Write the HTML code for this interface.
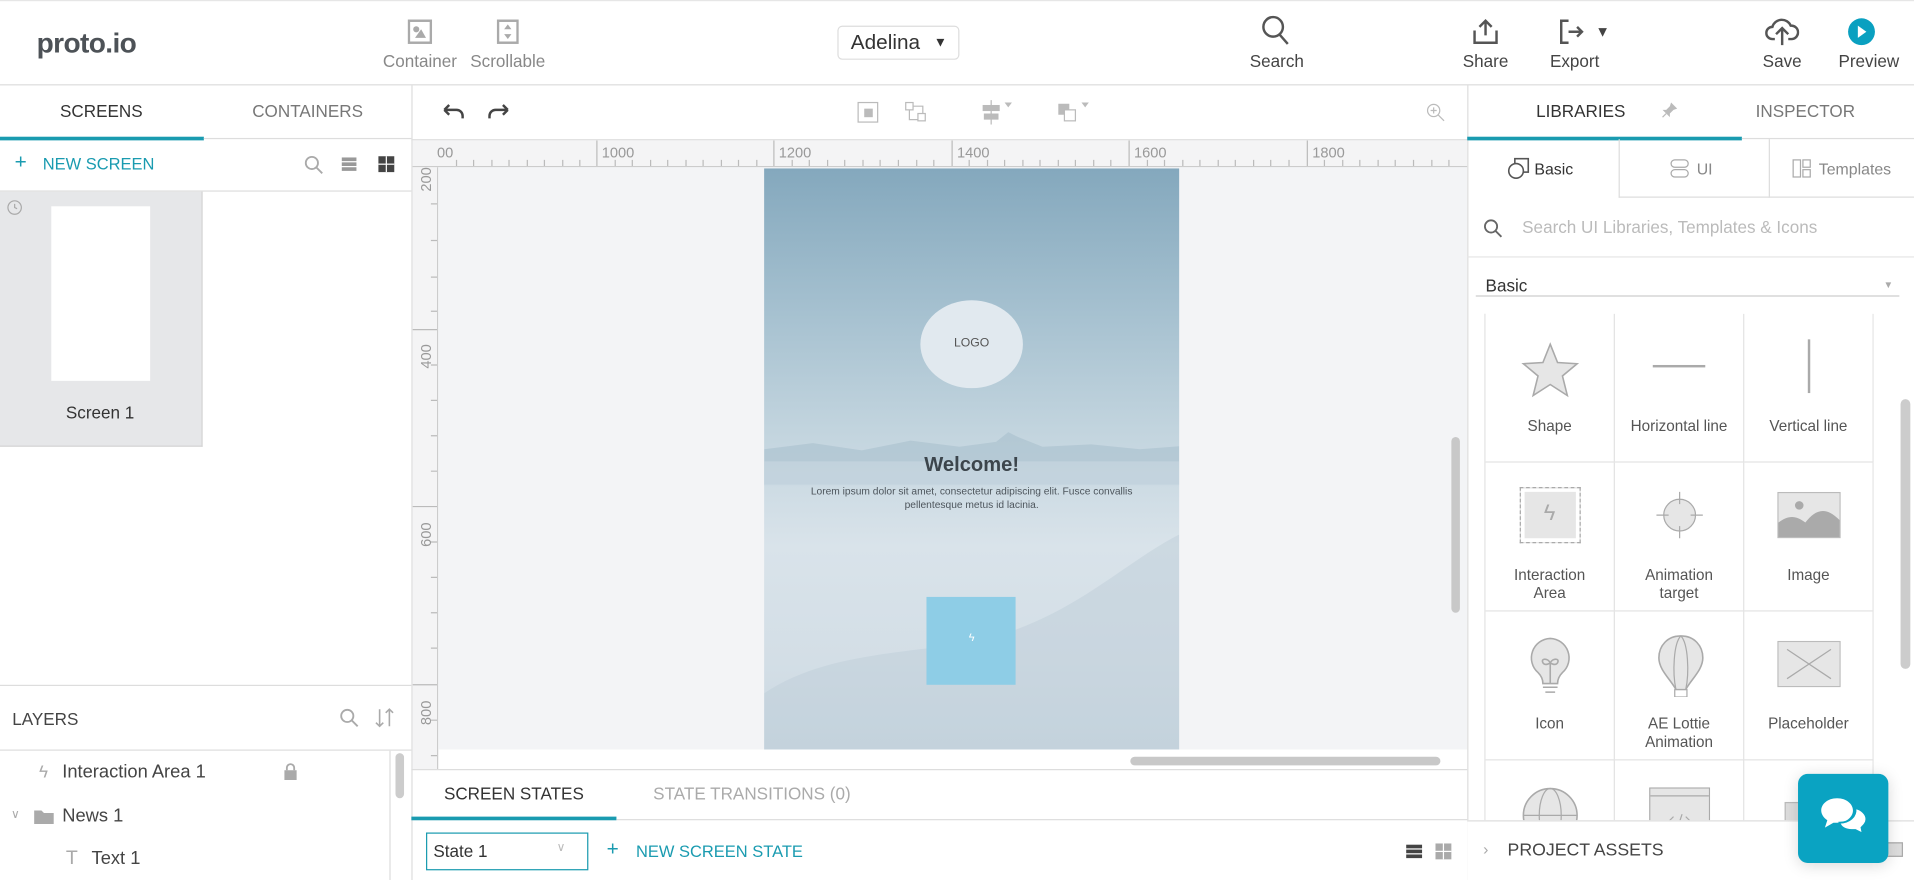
<!DOCTYPE html>
<html><head><meta charset="utf-8"><style>
*{box-sizing:border-box;margin:0;padding:0}
html,body{width:1914px;height:880px;overflow:hidden;background:#fff}
#s{position:absolute;left:0;top:0;width:1568px;height:721px;transform:scale(1.22066);transform-origin:0 0;font-family:"Liberation Sans",sans-serif;color:#555;font-size:14px}
.a{position:absolute}
.t{position:absolute;white-space:nowrap}
.c{transform:translateX(-50%)}
.g{color:#888}
.teal{color:#1a9bb0}
.cell{position:absolute;width:106px;height:122px;border-right:1px solid #e3e3e3;border-bottom:1px solid #e3e3e3;text-align:center;font-size:12.5px;color:#555}
.cell span{position:absolute;left:0;right:0;line-height:15px}
</style></head><body><div id="s">
<div class="a" style="left:0;top:0;width:1568px;height:1px;background:#e6e6e6"></div>
<div class="a" style="left:0;top:69px;width:1568px;height:1px;background:#ddd"></div>
<div class="t" style="left:30px;top:22px;font-size:23px;font-weight:bold;color:#4d5257;letter-spacing:-0.5px">proto.io</div>
<svg class="a" style="left:334px;top:16px" width="20" height="20"><rect x="1" y="1" width="18" height="18" fill="none" stroke="#aaa" stroke-width="2"/><circle cx="7" cy="8" r="2.5" fill="#aaa"/><path d="M6 15l5-7 4 7z" fill="#aaa"/></svg>
<div class="t c g" style="left:344px;top:42px;font-size:14px">Container</div>
<svg class="a" style="left:407px;top:16px" width="18" height="20"><rect x="1" y="1" width="16" height="18" fill="none" stroke="#aaa" stroke-width="2"/><path d="M9 4l-3 4h6zM9 16l-3-4h6z" fill="#aaa"/></svg>
<div class="t c g" style="left:416px;top:42px;font-size:14px">Scrollable</div>
<div class="a" style="left:686px;top:21px;width:100px;height:28px;border:1px solid #ddd;border-radius:4px"></div>
<div class="t" style="left:697px;top:25px;font-size:17px;color:#333">Adelina</div>
<div class="t" style="left:765px;top:29px;font-size:11px;color:#333">▼</div>
<svg class="a" style="left:1033px;top:12px" width="24" height="26"><circle cx="10" cy="10" r="8" fill="none" stroke="#555" stroke-width="2"/><path d="M15 16l7 8" stroke="#555" stroke-width="2"/></svg>
<div class="t c" style="left:1046px;top:42px;color:#444">Search</div>
<svg class="a" style="left:1206px;top:15px" width="22" height="22"><path d="M11 14V2M6 7l5-5 5 5" fill="none" stroke="#555" stroke-width="2"/><path d="M2 10v10h18V10" fill="none" stroke="#555" stroke-width="2"/></svg>
<div class="t c" style="left:1217px;top:42px;color:#444">Share</div>
<svg class="a" style="left:1277px;top:15px" width="22" height="22"><path d="M8 2H2v18h6" fill="none" stroke="#555" stroke-width="2"/><path d="M8 11h11M15 7l4 4-4 4" fill="none" stroke="#555" stroke-width="2"/></svg>
<div class="t" style="left:1307px;top:19px;font-size:12px;color:#444">▼</div>
<div class="t c" style="left:1290px;top:42px;color:#444">Export</div>
<svg class="a" style="left:1446px;top:13px" width="28" height="26"><path d="M8 19H6a5 5 0 010-10 8 8 0 0115-1 5 5 0 011 11h-3" fill="none" stroke="#555" stroke-width="2"/><path d="M14 24V11M9 15l5-5 5 5" fill="none" stroke="#555" stroke-width="2"/></svg>
<div class="t c" style="left:1460px;top:42px;color:#444">Save</div>
<svg class="a" style="left:1513px;top:14px" width="24" height="24"><circle cx="12" cy="12" r="11" fill="#0aa0c0"/><path d="M9 7l7 5-7 5z" fill="#fff"/></svg>
<div class="t c" style="left:1531px;top:42px;color:#444">Preview</div>

<div class="a" style="left:337px;top:70px;width:1px;height:651px;background:#ddd"></div>
<div class="t c" style="left:83px;top:83px;color:#333">SCREENS</div>
<div class="t c g" style="left:252px;top:83px;color:#777">CONTAINERS</div>
<div class="a" style="left:0;top:112px;width:167px;height:3px;background:#1a9bb0"></div>
<div class="a" style="left:167px;top:113px;width:170px;height:1px;background:#ddd"></div>
<div class="t teal" style="left:12px;top:125px;font-size:17px;line-height:16px">+</div>
<div class="t teal" style="left:35px;top:127px;font-size:13.5px">NEW SCREEN</div>
<svg class="a" style="left:249px;top:127px" width="16" height="16"><circle cx="6.5" cy="6.5" r="5" fill="none" stroke="#aaa" stroke-width="1.5"/><path d="M10 10l5 5" stroke="#aaa" stroke-width="1.5"/></svg>
<div class="a" style="left:280px;top:129px;width:12px;height:3px;background:#999;box-shadow:0 4px 0 #999,0 8px 0 #999"></div>
<div class="a" style="left:310px;top:128px;width:13px;height:13px;background:linear-gradient(#fff,#fff) 6px 0/1px 13px no-repeat,linear-gradient(#fff,#fff) 0 6px/13px 1px no-repeat,#444"></div>
<div class="a" style="left:0;top:156px;width:337px;height:1px;background:#ddd"></div>
<div class="a" style="left:0;top:157px;width:166px;height:209px;background:#e6e7e9;border-right:1px solid #d5d5d5;border-bottom:1px solid #d5d5d5"></div>
<svg class="a" style="left:5px;top:163px" width="14" height="14"><circle cx="7" cy="7" r="5.5" fill="none" stroke="#aaa"/><path d="M7 4v3l2 1" fill="none" stroke="#aaa"/></svg>
<div class="a" style="left:42px;top:169px;width:81px;height:143px;background:#fff"></div>
<div class="t c" style="left:82px;top:330px;color:#333">Screen 1</div>
<div class="a" style="left:0;top:561px;width:337px;height:1px;background:#ddd"></div>
<div class="t" style="left:10px;top:581px;color:#444">LAYERS</div>
<svg class="a" style="left:278px;top:580px" width="16" height="16"><circle cx="6.5" cy="6.5" r="5" fill="none" stroke="#aaa" stroke-width="1.5"/><path d="M10 10l5 5" stroke="#aaa" stroke-width="1.5"/></svg>
<svg class="a" style="left:306px;top:580px" width="18" height="16"><path d="M5 1v14M2 12l3 3 3-3M13 15V1M10 4l3-3 3 3" fill="none" stroke="#aaa" stroke-width="1.3"/></svg>
<div class="a" style="left:0;top:614px;width:337px;height:1px;background:#ddd"></div>
<div class="a" style="left:319px;top:615px;width:1px;height:106px;background:#ddd"></div>
<div class="a" style="left:324px;top:617px;width:7px;height:37px;background:#ccc;border-radius:4px"></div>
<div class="t" style="left:32px;top:624px;color:#aaa;font-size:14px">ϟ</div>
<div class="t" style="left:51px;top:624px;color:#444;font-size:15px">Interaction Area 1</div>
<svg class="a" style="left:232px;top:625px" width="12" height="14"><path d="M3 6V4a3 3 0 016 0v2" fill="none" stroke="#aaa" stroke-width="1.5"/><rect x="1" y="6" width="10" height="8" fill="#aaa"/></svg>
<div class="t" style="left:9px;top:662px;color:#aaa;font-size:10px">∨</div>
<svg class="a" style="left:27px;top:662px" width="18" height="14"><path d="M1 2h6l2 2h8v9H1z" fill="#aaa"/></svg>
<div class="t" style="left:51px;top:660px;color:#444;font-size:15px">News 1</div>
<div class="t" style="left:54px;top:695px;color:#aaa;font-size:16px">T</div>
<div class="t" style="left:75px;top:695px;color:#444;font-size:15px">Text 1</div>

<svg class="a" style="left:360px;top:82px" width="60" height="18"><path d="M4 8h10a5 5 0 015 5v2M4 8l4-4M4 8l4 4" fill="none" stroke="#444" stroke-width="2"/><path d="M56 8H46a5 5 0 00-5 5v2M56 8l-4-4M56 8l-4 4" fill="none" stroke="#444" stroke-width="2"/></svg>
<svg class="a" style="left:700px;top:81px" width="64" height="22"><rect x="3" y="3" width="16" height="16" fill="none" stroke="#bbb"/><rect x="8" y="8" width="7" height="7" fill="#bbb"/><rect x="42" y="3" width="6" height="6" fill="none" stroke="#bbb"/><rect x="52" y="12" width="6" height="6" fill="none" stroke="#bbb"/><path d="M45 9v8h7M48 6h8v6" fill="none" stroke="#bbb"/></svg>
<svg class="a" style="left:802px;top:81px" width="30" height="22"><path d="M10 1v20" stroke="#bbb"/><rect x="3" y="5" width="14" height="5" fill="#bbb"/><rect x="4" y="12" width="12" height="5" fill="#bbb"/><path d="M21 3l3 4 3-4z" fill="#bbb"/></svg>
<svg class="a" style="left:865px;top:81px" width="30" height="22"><rect x="2" y="4" width="9" height="9" fill="#bbb"/><rect x="7" y="9" width="9" height="9" fill="#fff" stroke="#bbb"/><path d="M21 3l3 4 3-4z" fill="#bbb"/></svg>
<svg class="a" style="left:1168px;top:84px" width="16" height="16"><circle cx="6.5" cy="6.5" r="5" fill="none" stroke="#bbb"/><path d="M10 10l5 5M6.5 4v5M4 6.5h5" stroke="#bbb"/></svg>
<div class="a" style="left:337px;top:114px;width:865px;height:1px;background:#ddd"></div>
<div class="a" style="left:338px;top:115px;width:864px;height:22px;background:#f4f4f5;border-bottom:1px solid #ccc;overflow:hidden">
<svg width="864" height="22" style="position:absolute;left:0;top:0">
<g stroke="#bbb"><path d="M151 0v22M296 0v22M442 0v22M587 0v22M733 0v22"/>
<path d="M36 16v5M50 16v5M65 16v5M79 16v5M94 16v5M108 16v5M123 16v5M137 16v5M166 16v5M180 16v5M195 16v5M209 16v5M224 16v5M238 16v5M253 16v5M267 16v5M282 16v5M311 16v5M325 16v5M340 16v5M354 16v5M369 16v5M383 16v5M398 16v5M413 16v5M427 16v5M456 16v5M471 16v5M485 16v5M500 16v5M514 16v5M529 16v5M543 16v5M558 16v5M572 16v5M602 16v5M616 16v5M631 16v5M645 16v5M660 16v5M674 16v5M689 16v5M703 16v5M718 16v5M747 16v5M762 16v5M776 16v5M791 16v5M805 16v5M820 16v5M835 16v5M849 16v5"/></g>
<g font-size="12" fill="#999" font-family="Liberation Sans"><text x="20" y="14">00</text><text x="155" y="14">1000</text><text x="300" y="14">1200</text><text x="446" y="14">1400</text><text x="591" y="14">1600</text><text x="737" y="14">1800</text></g></svg></div>
<div class="a" style="left:338px;top:137px;width:21px;height:493px;background:#f4f4f5;border-right:1px solid #ccc;overflow:hidden">
<svg width="21" height="493" style="position:absolute;left:0;top:0"><g stroke="#bbb"><path d="M0 133h21M0 278h21M0 424h21"/><path d="M15 30h5M15 60h5M15 90h5M15 118h5M15 162h5M15 191h5M15 220h5M15 249h5M15 307h5M15 336h5M15 365h5M15 394h5M15 453h5M15 482h5"/></g>
<g font-size="12" fill="#999" font-family="Liberation Sans"><text transform="translate(15,20) rotate(-90)">200</text><text transform="translate(15,165) rotate(-90)">400</text><text transform="translate(15,311) rotate(-90)">600</text><text transform="translate(15,457) rotate(-90)">800</text></g></svg></div>
<div class="a" style="left:359px;top:137px;width:843px;height:477px;background:#f3f4f6"></div>
<div class="a" style="left:626px;top:138px;width:340px;height:476px;overflow:hidden;background:linear-gradient(180deg,#84a8bd 0%,#a6c1d0 25%,#c2d4de 45%,#d9e3ea 65%,#d3dee6 85%,#cad8e1 100%)">
<svg class="a" style="left:0;top:200px" width="340" height="60"><path d="M0 30l40-5 40 6 40-8 40 5 30-4 10-8 8 4 20 8 40-2 40 4 40-3 32 2v30H0z" fill="#a9bfcd" opacity=".6"/><path d="M0 40h340v20H0z" fill="#cbd9e2" opacity=".6"/></svg>
<svg class="a" style="left:0;top:300px" width="340" height="176"><path d="M0 130c60-40 140-30 200-50 60-20 100-60 140-80v186H0z" fill="#bccdd8" opacity=".45"/></svg>
<div class="a" style="left:128px;top:108px;width:84px;height:72px;border-radius:50%;background:#e1e9ef"></div>
<div class="t c" style="left:170px;top:138px;font-size:10px;color:#555">LOGO</div>
<div class="t c" style="left:170px;top:234px;font-size:16.5px;font-weight:bold;color:#3c454c">Welcome!</div>
<div class="a" style="left:20px;top:259px;width:300px;text-align:center;font-size:8.4px;line-height:11px;color:#4d555c">Lorem ipsum dolor sit amet, consectetur adipiscing elit. Fusce convallis pellentesque metus id lacinia.</div>
<div class="a" style="left:133px;top:351px;width:73px;height:72px;background:#8ecde6"></div>
<div class="t c" style="left:170px;top:379px;font-size:9px;color:#fff">ϟ</div>
</div>
<div class="a" style="left:1189px;top:358px;width:7px;height:144px;background:#c8c8c8;border-radius:4px"></div>
<div class="a" style="left:926px;top:620px;width:254px;height:7px;background:#c8c8c8;border-radius:4px"></div>
<div class="a" style="left:337px;top:630px;width:865px;height:1px;background:#ddd"></div>
<div class="t c" style="left:421px;top:642px;color:#333">SCREEN STATES</div>
<div class="t c" style="left:616px;top:642px;color:#aaa">STATE TRANSITIONS (0)</div>
<div class="a" style="left:337px;top:669px;width:168px;height:3px;background:#1a9bb0"></div>
<div class="a" style="left:505px;top:671px;width:697px;height:1px;background:#ddd"></div>
<div class="a" style="left:349px;top:682px;width:133px;height:31px;border:1px solid #1a9bb0"></div>
<div class="t" style="left:355px;top:689px;color:#333">State 1</div>
<div class="t" style="left:456px;top:689px;color:#bbb;font-size:10px">∨</div>
<div class="t teal" style="left:497px;top:686px;font-size:17px">+</div>
<div class="t teal" style="left:521px;top:690px;font-size:13.5px">NEW SCREEN STATE</div>
<div class="a" style="left:1152px;top:692px;width:13px;height:3px;background:#444;box-shadow:0 4px 0 #444,0 8px 0 #444"></div>
<div class="a" style="left:1176px;top:691px;width:13px;height:13px;background:linear-gradient(#fff,#fff) 6px 0/1px 13px no-repeat,linear-gradient(#fff,#fff) 0 6px/13px 1px no-repeat,#aaa"></div>

<div class="a" style="left:1202px;top:70px;width:1px;height:651px;background:#ddd"></div>
<div class="t c" style="left:1295px;top:83px;color:#333">LIBRARIES</div>
<svg class="a" style="left:1361px;top:83px" width="14" height="14"><path d="M8 1l5 5-3 1-3 3 0 3-6-6 3 0 3-3z" fill="#bbb"/><path d="M4 10l-3 3" stroke="#bbb"/></svg>
<div class="t c" style="left:1479px;top:83px;color:#777">INSPECTOR</div>
<div class="a" style="left:1202px;top:112px;width:225px;height:3px;background:#1a9bb0"></div>
<div class="a" style="left:1427px;top:113px;width:141px;height:1px;background:#ddd"></div>
<div class="a" style="left:1326px;top:114px;width:1px;height:48px;background:#ddd"></div>
<div class="a" style="left:1449px;top:114px;width:1px;height:48px;background:#ddd"></div>
<div class="a" style="left:1326px;top:161px;width:242px;height:1px;background:#ddd"></div>
<svg class="a" style="left:1235px;top:129px" width="18" height="18"><rect x="6" y="1" width="11" height="11" fill="none" stroke="#555" stroke-width="1.3"/><circle cx="7" cy="11" r="6" fill="#fff" stroke="#555" stroke-width="1.3"/></svg>
<div class="t" style="left:1257px;top:131px;font-size:13px;color:#333">Basic</div>
<svg class="a" style="left:1368px;top:130px" width="16" height="16"><rect x="1" y="1" width="14" height="6" rx="3" fill="none" stroke="#aaa"/><rect x="1" y="9" width="14" height="6" rx="3" fill="none" stroke="#aaa"/></svg>
<div class="t" style="left:1390px;top:131px;font-size:13px;color:#888">UI</div>
<svg class="a" style="left:1468px;top:130px" width="16" height="16"><rect x="1" y="1" width="6" height="14" fill="none" stroke="#aaa"/><rect x="9" y="1" width="6" height="6" fill="none" stroke="#aaa"/><rect x="9" y="9" width="6" height="6" fill="none" stroke="#aaa"/></svg>
<div class="t" style="left:1490px;top:131px;font-size:13px;color:#888">Templates</div>
<svg class="a" style="left:1215px;top:179px" width="16" height="16"><circle cx="6.5" cy="6.5" r="5" fill="none" stroke="#666" stroke-width="1.5"/><path d="M10 10l5 5" stroke="#666" stroke-width="1.5"/></svg>
<div class="t" style="left:1247px;top:178px;font-size:14px;color:#bbb">Search UI Libraries, Templates &amp; Icons</div>
<div class="a" style="left:1202px;top:210px;width:366px;height:1px;background:#e6e6e6"></div>
<div class="t" style="left:1217px;top:226px;font-size:14px;color:#333">Basic</div>
<div class="t" style="left:1543px;top:229px;font-size:8px;color:#aaa">▼</div>
<div class="a" style="left:1209px;top:242px;width:347px;height:1px;background:#ccc"></div>
<div class="a" style="left:1216px;top:257px;width:319px;height:415px;overflow:hidden;border-left:1px solid #e3e3e3">
<div class="cell" style="left:0;top:0"><svg style="position:absolute;left:28px;top:22px" width="50" height="48"><path d="M25 3l6 15 16 1-12 10 4 16-14-9-14 9 4-16L3 19l16-1z" fill="#e6e6e6" stroke="#aaa" stroke-width="1.3"/></svg><span style="top:85px">Shape</span></div>
<div class="cell" style="left:106px;top:0"><div style="position:absolute;left:31px;top:42px;width:43px;height:2px;background:#aaa"></div><span style="top:85px">Horizontal line</span></div>
<div class="cell" style="left:212px;top:0"><div style="position:absolute;left:52px;top:21px;width:2px;height:44px;background:#aaa"></div><span style="top:85px">Vertical line</span></div>
<div class="cell" style="left:0;top:122px"><div style="position:absolute;left:28px;top:20px;width:50px;height:46px;border:1px dashed #aaa;background:#e6e6e6;box-shadow:inset 0 0 0 3px #fff"></div><div style="position:absolute;left:0;right:0;top:31px;font-size:18px;color:#aaa">ϟ</div><span style="top:85px">Interaction<br>Area</span></div>
<div class="cell" style="left:106px;top:122px"><svg style="position:absolute;left:32px;top:22px" width="42" height="42"><circle cx="21" cy="21" r="13" fill="#e6e6e6" stroke="#aaa"/><path d="M21 2v10M21 30v10M2 21h10M30 21h10" stroke="#aaa"/></svg><span style="top:85px">Animation<br>target</span></div>
<div class="cell" style="left:212px;top:122px"><svg style="position:absolute;left:27px;top:24px" width="52" height="38"><rect x=".5" y=".5" width="51" height="37" fill="#e6e6e6" stroke="#bbb"/><circle cx="18" cy="11" r="3.5" fill="#aaa"/><path d="M1 37V25c8-6 14-6 22 0 8-10 16-14 28-2v14z" fill="#aaa"/></svg><span style="top:85px">Image</span></div>
<div class="cell" style="left:0;top:244px"><svg style="position:absolute;left:35px;top:20px" width="36" height="52"><path d="M18 2a16 16 0 00-10 28c3 3 4 6 4 9h12c0-3 1-6 4-9A16 16 0 0018 2z" fill="#e6e6e6" stroke="#aaa" stroke-width="1.3"/><path d="M18 39V22M18 22c-2-4-8-4-6 0 2 3 6 0 6 0 0 0 4 3 6 0 2-4-4-4-6 0M12 42h12M14 46h8" fill="none" stroke="#aaa" stroke-width="1.3"/></svg><span style="top:85px">Icon</span></div>
<div class="cell" style="left:106px;top:244px"><svg style="position:absolute;left:33px;top:18px" width="42" height="52"><path d="M21 2C10 2 3 10 3 20c0 10 10 18 14 26h8c4-8 14-16 14-26 0-10-7-18-18-18z" fill="#e6e6e6" stroke="#aaa" stroke-width="1.3"/><path d="M21 2c-6 6-7 30-4 44M21 2c6 6 7 30 4 44" fill="none" stroke="#aaa"/><rect x="16" y="46" width="10" height="6" fill="#fff" stroke="#aaa"/></svg><span style="top:85px">AE Lottie<br>Animation</span></div>
<div class="cell" style="left:212px;top:244px"><svg style="position:absolute;left:27px;top:24px" width="52" height="38"><rect x=".5" y=".5" width="51" height="37" fill="#e6e6e6" stroke="#bbb"/><path d="M8 7l36 24M44 7L8 31" stroke="#aaa"/></svg><span style="top:85px">Placeholder</span></div>
<div class="cell" style="left:0;top:366px"><svg style="position:absolute;left:28px;top:20px" width="50" height="50"><circle cx="25" cy="25" r="22" fill="#e6e6e6" stroke="#aaa" stroke-width="1.3"/><ellipse cx="25" cy="25" rx="9" ry="22" fill="none" stroke="#aaa"/><path d="M3 25h44" stroke="#aaa"/></svg></div>
<div class="cell" style="left:106px;top:366px"><svg style="position:absolute;left:28px;top:22px" width="50" height="40"><rect x=".5" y=".5" width="49" height="38" fill="#e6e6e6" stroke="#aaa"/><path d="M1 7h48" stroke="#aaa"/><path d="M20 24l-4 4 4 4M30 24l4 4-4 4M27 22l-4 12" fill="none" stroke="#aaa"/></svg></div>
<div class="cell" style="left:212px;top:366px"><div style="position:absolute;left:33px;top:34px;width:20px;height:20px;background:#ddd;border:1px solid #bbb"></div></div>
</div>
<div class="a" style="left:1557px;top:327px;width:8px;height:221px;background:#ccc;border-radius:4px"></div>
<div class="a" style="left:1202px;top:672px;width:366px;height:49px;background:#fff;border-top:1px solid #ddd"></div>
<div class="t" style="left:1215px;top:688px;color:#aaa;font-size:13px">›</div>
<div class="t" style="left:1235px;top:689px;font-size:14.5px;color:#444">PROJECT ASSETS</div>
<div class="a" style="left:1545px;top:690px;width:14px;height:12px;border:1px solid #aaa;background:#ddd"></div>
<div class="a" style="left:1473px;top:634px;width:74px;height:73px;background:#0aa3c2;border-radius:8px;box-shadow:0 2px 12px rgba(0,0,0,.15)"></div>
<svg class="a" style="left:1489px;top:650px" width="44" height="40"><path d="M16 4c-8 0-13 5-13 10 0 3 2 6 5 8l-2 6 7-4c1 0 2 0 3 0 8 0 13-5 13-10S24 4 16 4z" fill="#fff"/><path d="M31 12c5 1 9 5 9 9 0 3-2 5-4 7l1 5-6-3c-1 0-2 0-3 0-5 0-9-2-10-6 8 0 14-5 13-12z" fill="#fff" stroke="#0aa3c2" stroke-width="1.5"/></svg>
</div></body></html>
